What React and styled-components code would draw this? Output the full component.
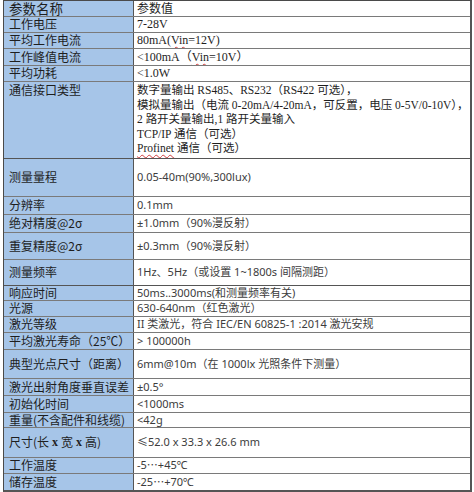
import styled, { createGlobalStyle } from "styled-components"

const GlobalStyle = createGlobalStyle`
  html, body { margin:0; padding:0; background:#fff; }
  * { box-sizing:border-box; }
`

const CJK = `"Noto Sans CJK SC", sans-serif`
const SERIF = `"Liberation Serif", "Noto Sans CJK SC", serif`
const SANS = `"Noto Sans", "Noto Sans CJK SC", sans-serif`

const Page = styled.div`
  padding:0 0 0 3px;
`
const Table = styled.div`
  width:469px;
  border-top:1px solid #4a4a4a;
  border-left:1px solid #4a4a4a;
  border-right:2px solid #555;
  border-bottom:2px solid #555;
`
const Row = styled.div`
  display:grid;
  grid-template-columns:130px 1fr;
  height:${p => p.$h}px;
  border-bottom:1px solid ${p => (p.$strong ? "#555" : "#7a7a7a")};
  &:last-child { border-bottom:none; }
`
const Key = styled.div`
  background:#a6c5e8;
  border-right:1px solid #555;
  padding:${p => (p.$top ? "1px" : "0")} 0 0 5px;
  display:flex;
  align-items:${p => (p.$top ? "flex-start" : "center")};
  font-family:${CJK};
  font-size:${p => (p.$big ? "13.5px" : "12px")};
  line-height:14.5px;
  color:#1e1e1e;
  white-space:nowrap;
  overflow:hidden;
`
const Value = styled.div`
  background:#fff;
  padding:${p => (p.$block ? "1px" : "0")} 0 0 3px;
  display:flex;
  flex-direction:column;
  justify-content:${p => (p.$block ? "flex-start" : "center")};
  font-family:${p => (p.$sans ? SANS : p.$cjk ? CJK : SERIF)};
  font-size:${p => (p.$sans ? "11px" : p.$block ? "11.5px" : "12px")};
  line-height:14.5px;
  color:${p => (p.$sans ? "#3c3c3c" : "#1e1e1e")};
  white-space:nowrap;
  overflow:hidden;
`
const Line = styled.div`
  white-space:nowrap;
`
const Squiggle = styled.span`
  text-decoration:underline wavy #d04040;
  text-decoration-thickness:1px;
  text-underline-offset:2px;
`
const Cross = styled.span`
  font-family:"Liberation Serif", serif;
  font-weight:bold;
  margin:0 3px;
`

const rows = [
  { k: "参数名称", v: "参数值", h: 16, big: true, cjk: true },
  { k: "工作电压", v: "7-28V", h: 16 },
  { k: "平均工作电流", v: <>80mA(<Squiggle>Vin</Squiggle>=12V)</>, h: 16 },
  { k: "工作峰值电流", v: <>&lt;100mA（<Squiggle>Vin</Squiggle>=10V）</>, h: 17 },
  { k: "平均功耗", v: "<1.0W", h: 16 },
  {
    k: "通信接口类型", h: 77, top: true, strong: true,
    lines: [
      "数字量输出 RS485、RS232（RS422 可选），",
      "模拟量输出（电流 0-20mA/4-20mA，可反置，电压 0-5V/0-10V），",
      "2 路开关量输出,1 路开关量输入",
      "TCP/IP 通信（可选）",
      <><Squiggle>Profinet</Squiggle> 通信（可选）</>,
    ],
  },
  { k: "测量量程", v: "0.05-40m(90%,300lux)", h: 38, sans: true },
  { k: "分辨率", v: "0.1mm", h: 18, sans: true },
  { k: "绝对精度@2σ", v: "±1.0mm（90%漫反射）", h: 18, sans: true },
  { k: "重复精度@2σ", v: "±0.3mm（90%漫反射）", h: 27, sans: true },
  { k: "测量频率", v: "1Hz、5Hz（或设置 1~1800s 间隔测距）", h: 26, sans: true, strong: true },
  { k: "响应时间", v: "50ms..3000ms(和测量频率有关)", h: 15, sans: true },
  { k: "光源", v: "630-640nm（红色激光）", h: 16, sans: true },
  { k: "激光等级", v: "II 类激光，符合 IEC/EN 60825-1 :2014 激光安规", h: 16, sans: true },
  { k: "平均激光寿命（25℃）", v: "> 100000h", h: 17, sans: true },
  { k: "典型光点尺寸（距离）", v: "6mm@10m（在 1000lx 光照条件下测量）", h: 29, sans: true },
  { k: "激光出射角度垂直误差", v: "±0.5°", h: 17, sans: true },
  { k: "初始化时间", v: "<1000ms", h: 17, sans: true },
  { k: "重量(不含配件和线缆)", v: "<42g", h: 15, sans: true },
  { k: <>尺寸(长<Cross>x</Cross>宽<Cross>x</Cross>高)</>, v: "≤52.0 x 33.3 x 26.6 mm", h: 30, sans: true },
  { k: "工作温度", v: "-5⋯+45℃", h: 16, sans: true },
  { k: "储存温度", v: "-25⋯+70℃", h: 16, sans: true },
]

const App = () => {
  return <Page>
    <GlobalStyle />
    <Table>
      {rows.map((r, i) => (
        <Row key={i} $h={r.h} $strong={r.strong}>
          <Key $top={r.top} $big={r.big}>{r.k}</Key>
          {r.lines
            ? <Value $block>
                {r.lines.map((l, j) => <Line key={j}>{l}</Line>)}
              </Value>
            : <Value $sans={r.sans} $cjk={r.cjk}><Line>{r.v}</Line></Value>}
        </Row>
      ))}
    </Table>
  </Page>
}

export default App
